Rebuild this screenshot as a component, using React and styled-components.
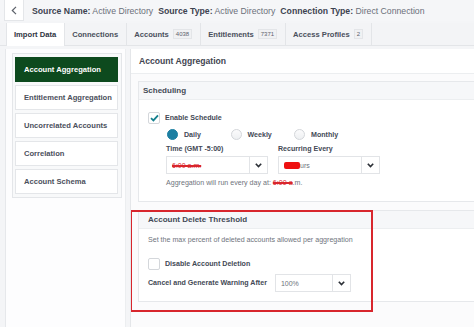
import React from "react";
import styled, { createGlobalStyle } from "styled-components";

const Global = createGlobalStyle`
  html, body { margin: 0; padding: 0; }
  body {
    background: #f4f5f7;
    font-family: "Liberation Sans", Arial, sans-serif;
    color: #3f4551;
    width: 474px;
    height: 327px;
    overflow: hidden;
  }
`;

const Page = styled.div`
  display: flex;
  flex-direction: column;
  height: 327px;
`;

const TopBar = styled.div`
  display: flex;
  align-items: center;
  height: 21px;
  gap: 8px;
  padding-left: 4px;
  background: #f5f6f8;
`;

const BackBtn = styled.div`
  width: 20px;
  height: 21px;
  box-sizing: border-box;
  background: #fff;
  border: 1px solid #e4e6e9;
  border-top: none;
  display: flex;
  align-items: center;
  justify-content: center;
  color: #5b6069;
`;

const Meta = styled.div`
  display: flex;
  gap: 5px;
  font-size: 8.7px;
  white-space: nowrap;
`;

const MetaItem = styled.span`
  color: #6b707a;
  b { color: #3d4350; font-weight: 700; }
`;

const TabsRow = styled.div`
  display: flex;
  margin-top: 2px;
  height: 22px;
  padding-left: 6px;
  border-bottom: 1px solid #e3e5e8;
  background: #f3f4f6;
`;

const Tab = styled.div`
  display: flex;
  align-items: center;
  gap: 4px;
  padding: 0 7.5px 0 ${(p) => (p.$active ? 7 : 7.5)}px;
  font-size: 7.6px;
  font-weight: 700;
  color: ${(p) => (p.$active ? "#2f3542" : "#4a505c")};
  background: ${(p) => (p.$active ? "#ffffff" : "transparent")};
  border-right: 1px solid #e3e5e8;
  border-left: ${(p) => (p.$active ? "1px solid #e3e5e8" : "none")};
  margin-bottom: ${(p) => (p.$active ? "-1px" : "0")};
  white-space: nowrap;
`;

const Badge = styled.span`
  font-size: 6px;
  font-weight: 400;
  color: #5d626c;
  background: #f0f1f3;
  border: 1px solid #e3e5e8;
  padding: 1px 2px;
`;

const Body = styled.div`
  flex: 1;
  display: flex;
  gap: 4px;
  padding-left: 5px;
  margin-top: 3px;
  min-height: 0;
`;

const LeftCol = styled.div`
  width: 121px;
  flex: none;
  box-sizing: border-box;
  background: #fdfdfe;
  border-left: 1px solid #e6e8eb;
  border-right: 1px solid #eceef0;
  padding: 4px 3px 0 6px;
`;

const SideBox = styled.div`
  display: flex;
  flex-direction: column;
  gap: 3px;
  padding: 3px 3px 3px 2px;
  border: 1px solid #e4e6e9;
  background: #f8f9fa;
`;

const SideItem = styled.div`
  height: 25px;
  box-sizing: border-box;
  display: flex;
  align-items: center;
  padding-left: 8px;
  font-size: 7.6px;
  font-weight: 700;
  white-space: nowrap;
  color: ${(p) => (p.$active ? "#ffffff" : "#4b505c")};
  background: ${(p) => (p.$active ? "#0d4a1e" : "#ffffff")};
  border: 1px solid ${(p) => (p.$active ? "#0d4a1e" : "#e4e6e9")};
`;

const RightCol = styled.div`
  flex: 1;
  min-width: 0;
  background: #fbfbfc;
  border-left: 1px solid #e4e6e9;
  display: flex;
  flex-direction: column;
  overflow: hidden;
`;

const PanelHeader = styled.div`
  height: 24px;
  flex: none;
  display: flex;
  align-items: center;
  padding-left: 8px;
  font-size: 8.6px;
  font-weight: 700;
  color: #3f4551;
  background: #ffffff;
  border-bottom: 1px solid #eceef0;
`;

const PanelBody = styled.div`
  position: relative;
  flex: 1;
  display: flex;
  flex-direction: column;
  gap: 8px;
  padding: 7px 0 0 7px;
`;

const Card = styled.div`
  margin-right: -4px;
  border: 1px solid #e6e8eb;
  background: #ffffff;
`;

const CardHeader = styled.div`
  height: 17px;
  display: flex;
  align-items: center;
  padding-left: ${(p) => p.$pad}px;
  font-size: 8px;
  font-weight: 700;
  color: #444a56;
  background: #f6f7f9;
  border-bottom: 1px solid #eceef0;
`;

const CardBody = styled.div`
  display: flex;
  flex-direction: column;
  padding: ${(p) => p.$pad};
`;

const Row = styled.div`
  display: flex;
  align-items: ${(p) => p.$align || "center"};
  gap: ${(p) => p.$gap || 0}px;
  margin-top: ${(p) => p.$mt || 0}px;
  padding-left: ${(p) => p.$pl || 0}px;
`;

const Check = styled.div`
  width: 12px;
  height: 12px;
  box-sizing: border-box;
  border: 1px solid #d4d7db;
  border-radius: 2px;
  background: #fff;
  display: flex;
  align-items: center;
  justify-content: center;
`;

const Label = styled.span`
  font-size: 7.1px;
  font-weight: 700;
  color: #434955;
  white-space: nowrap;
`;

const RadioItem = styled.div`
  width: 63.5px;
  display: flex;
  align-items: center;
  gap: 6px;
`;

const Radio = styled.div`
  width: 11px;
  height: 11px;
  box-sizing: border-box;
  border-radius: 50%;
  border: 1px solid ${(p) => (p.$on ? "#1c7fa2" : "#d3d6da")};
  background: ${(p) => (p.$on ? "#1c7fa2" : "linear-gradient(#fbfbfc, #eef0f2)")};
`;

const Field = styled.div`
  width: 102px;
  display: flex;
  flex-direction: column;
  gap: 3px;
`;

const Select = styled.div`
  width: ${(p) => p.$w}px;
  height: 18px;
  box-sizing: border-box;
  display: flex;
  border: 1px solid #e2e4e7;
  background: #fff;
`;

const SelectValue = styled.div`
  flex: 1;
  display: flex;
  align-items: center;
  padding-left: 5px;
  font-size: 7px;
  color: #6d727b;
  white-space: nowrap;
`;

const SelectArrow = styled.div`
  width: 17px;
  border-left: 1px solid #e2e4e7;
  display: flex;
  align-items: center;
  justify-content: center;
`;

const Note = styled.div`
  font-size: 7.1px;
  color: #6f747d;
  white-space: nowrap;
`;

const Struck = styled.span`
  color: #d9262c;
  text-decoration: line-through;
  text-decoration-thickness: 1.5px;
`;

const Redact = styled.span`
  display: inline-block;
  width: 16px;
  height: 7px;
  border-radius: 2px;
  background: #ee1111;
  vertical-align: middle;
`;

const Highlight = styled.div`
  position: absolute;
  left: -1px;
  top: 136px;
  width: 243px;
  height: 102px;
  box-sizing: border-box;
  border: 2px solid #d8262d;
  pointer-events: none;
`;

const Chevron = () => (
  <svg width="7" height="5" viewBox="0 0 7 5">
    <path d="M0.8 0.8 L3.5 3.6 L6.2 0.8" fill="none" stroke="#2b2f36" strokeWidth="1.6" />
  </svg>
);

const Tick = () => (
  <svg width="9" height="8" viewBox="0 0 9 8">
    <path d="M1 4.2 L3.4 6.4 L8 1.3" fill="none" stroke="#14808e" strokeWidth="1.8" />
  </svg>
);

export default function App() {
  return (
    <>
      <Global />
      <Page>
        <TopBar>
          <BackBtn>
            <svg width="6" height="9" viewBox="0 0 6 9">
              <path d="M5 0.8 L1.3 4.5 L5 8.2" fill="none" stroke="#5b6069" strokeWidth="1.2" />
            </svg>
          </BackBtn>
          <Meta>
            <MetaItem><b>Source Name:</b> Active Directory</MetaItem>
            <MetaItem><b>Source Type:</b> Active Directory</MetaItem>
            <MetaItem><b>Connection Type:</b> Direct Connection</MetaItem>
          </Meta>
        </TopBar>
        <TabsRow>
          <Tab $active>Import Data</Tab>
          <Tab>Connections</Tab>
          <Tab>Accounts <Badge>4038</Badge></Tab>
          <Tab>Entitlements <Badge>7371</Badge></Tab>
          <Tab>Access Profiles <Badge>2</Badge></Tab>
        </TabsRow>
        <Body>
          <LeftCol>
            <SideBox>
              <SideItem $active>Account Aggregation</SideItem>
              <SideItem>Entitlement Aggregation</SideItem>
              <SideItem>Uncorrelated Accounts</SideItem>
              <SideItem>Correlation</SideItem>
              <SideItem>Account Schema</SideItem>
            </SideBox>
          </LeftCol>
          <RightCol>
            <PanelHeader>Account Aggregation</PanelHeader>
            <PanelBody>
              <Card>
                <CardHeader $pad={4}>Scheduling</CardHeader>
                <CardBody $pad="12px 0 14px 9px">
                  <Row $gap={5}>
                    <Check><Tick /></Check>
                    <Label>Enable Schedule</Label>
                  </Row>
                  <Row $mt={5} $pl={19}>
                    <RadioItem><Radio $on /><Label>Daily</Label></RadioItem>
                    <RadioItem><Radio /><Label>Weekly</Label></RadioItem>
                    <RadioItem><Radio /><Label>Monthly</Label></RadioItem>
                  </Row>
                  <Row $mt={5} $pl={18} $gap={10} $align="flex-start">
                    <Field>
                      <Label>Time (GMT -5:00)</Label>
                      <Select $w={102}>
                        <SelectValue><Struck>6:00 a.m.</Struck></SelectValue>
                        <SelectArrow><Chevron /></SelectArrow>
                      </Select>
                    </Field>
                    <Field>
                      <Label>Recurring Every</Label>
                      <Select $w={102}>
                        <SelectValue><Redact />urs</SelectValue>
                        <SelectArrow><Chevron /></SelectArrow>
                      </Select>
                    </Field>
                  </Row>
                  <Row $mt={5} $pl={18}>
                    <Note>Aggregation will run every day at: <Struck>6:00 a</Struck>.m.</Note>
                  </Row>
                </CardBody>
              </Card>
              <Card>
                <CardHeader $pad={9}>Account Delete Threshold</CardHeader>
                <CardBody $pad="7px 0 9px 9px">
                  <Note>Set the max percent of deleted accounts allowed per aggregation</Note>
                  <Row $gap={5} $mt={14}>
                    <Check />
                    <Label>Disable Account Deletion</Label>
                  </Row>
                  <Row $gap={8} $mt={4}>
                    <Label>Cancel and Generate Warning After</Label>
                    <Select $w={76}>
                      <SelectValue>100%</SelectValue>
                      <SelectArrow><Chevron /></SelectArrow>
                    </Select>
                  </Row>
                </CardBody>
              </Card>
              <Highlight />
            </PanelBody>
          </RightCol>
        </Body>
      </Page>
    </>
  );
}
